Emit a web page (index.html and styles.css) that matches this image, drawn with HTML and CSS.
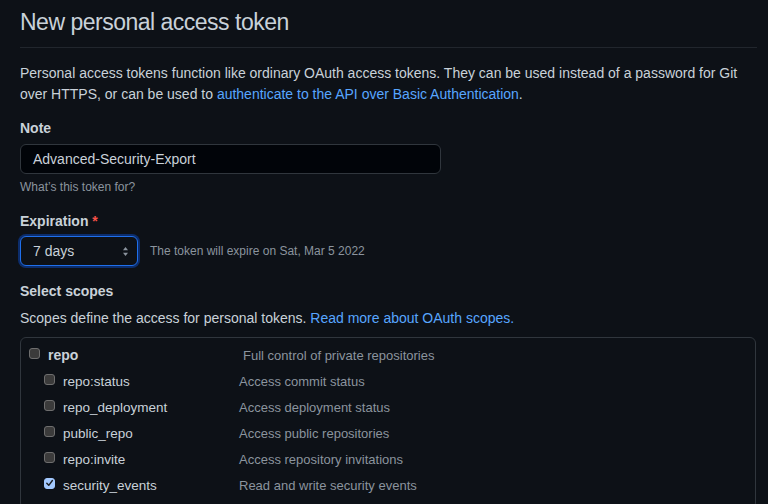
FILE: index.html
```html
<!DOCTYPE html>
<html>
<head>
<meta charset="utf-8">
<link rel="stylesheet" href="styles.css">
</head>
<body>
<main class="page">
  <h1 class="title">New personal access token</h1>
  <p class="intro">Personal access tokens function like ordinary OAuth access tokens. They can be used instead of a password for Git over HTTPS, or can be used to <a href="#">authenticate to the API over Basic Authentication</a>.</p>

  <div class="field">
    <label class="label">Note</label>
    <div class="input">Advanced-Security-Export</div>
    <p class="hint">What’s this token for?</p>
  </div>

  <div class="field exp">
    <label class="label">Expiration <span class="req">*</span></label>
    <div class="exp-row">
      <div class="select">
        <span>7 days</span>
        <svg class="arrows" width="7" height="11" viewBox="0 0 7 11"><path d="M3.5 1 L6 4.2 H1 Z M3.5 10 L6 6.8 H1 Z" fill="#8b949e"/></svg>
      </div>
      <span class="note">The token will expire on Sat, Mar 5 2022</span>
    </div>
  </div>

  <div class="field scopes">
    <label class="label">Select scopes</label>
    <p class="scope-desc">Scopes define the access for personal tokens. <a href="#">Read more about OAuth scopes.</a></p>
  </div>

  <div class="box">
    <div class="row parent">
      <span class="cb"></span>
      <span class="name">repo</span>
      <span class="desc">Full control of private repositories</span>
    </div>
    <div class="row child">
      <span class="cb"></span>
      <span class="name">repo:status</span>
      <span class="desc">Access commit status</span>
    </div>
    <div class="row child">
      <span class="cb"></span>
      <span class="name">repo_deployment</span>
      <span class="desc">Access deployment status</span>
    </div>
    <div class="row child">
      <span class="cb"></span>
      <span class="name">public_repo</span>
      <span class="desc">Access public repositories</span>
    </div>
    <div class="row child">
      <span class="cb"></span>
      <span class="name">repo:invite</span>
      <span class="desc">Access repository invitations</span>
    </div>
    <div class="row child">
      <span class="cb checked"><svg width="10" height="10" viewBox="0 0 10 10"><path d="M2 5.2 L4.2 7.6 L8.2 2.2" fill="none" stroke="#1b1f24" stroke-width="1.6" stroke-linecap="round" stroke-linejoin="round"/></svg></span>
      <span class="name">security_events</span>
      <span class="desc">Read and write security events</span>
    </div>
  </div>
</main>
</body>
</html>
```

FILE: styles.css
```css
html, body {
  margin: 0;
  padding: 0;
  background: #0d1117;
  height: 504px;
  overflow: hidden;
}
body {
  font-family: "Liberation Sans", Arial, sans-serif;
  color: #c9d1d9;
  font-size: 14px;
}
.page {
  padding: 0 11px 0 20px;
}
.title {
  margin: 0;
  padding: 9px 0 12px;
  font-size: 23px;
  letter-spacing: -0.5px;
  font-weight: 400;
  line-height: 26px;
  color: #c9d1d9;
  border-bottom: 1px solid #21262d;
}
.intro {
  margin: 15px 0 0;
  line-height: 21px;
}
a {
  color: #58a6ff;
  text-decoration: none;
}
.field {
  margin-top: 13px;
}
.label {
  display: block;
  font-weight: 600;
  line-height: 20px;
}
.input {
  margin-top: 6px;
  width: 421px;
  height: 30px;
  box-sizing: border-box;
  border: 1px solid #30363d;
  border-radius: 6px;
  background: #010409;
  padding: 0 12px;
  line-height: 28px;
  color: #c9d1d9;
}
.hint {
  margin: 5px 0 0;
  font-size: 12px;
  line-height: 16px;
  color: #8b949e;
}
.exp {
  margin-top: 16px;
}
.req {
  color: #f85149;
}
.exp-row {
  margin-top: 5px;
  display: flex;
  align-items: center;
  gap: 12px;
}
.select {
  width: 118px;
  height: 30px;
  box-sizing: border-box;
  border: 1px solid #1f6feb;
  box-shadow: 0 0 0 2px #0c2d6b;
  border-radius: 6px;
  background: #0d1117;
  padding: 0 8px 0 12px;
  display: flex;
  align-items: center;
  justify-content: space-between;
}
.note {
  font-size: 12px;
  color: #8b949e;
}
.scopes {
  margin-top: 15px;
}
.scope-desc {
  margin: 7px 0 0;
  line-height: 20px;
}
.box {
  margin-top: 9px;
  width: 736px;
  box-sizing: border-box;
  border: 1px solid #30363d;
  border-radius: 6px;
  padding: 4px 0 10px;
}
.row {
  display: flex;
  align-items: center;
  height: 26px;
}
.parent {
  padding-left: 8px;
}
.child {
  padding-left: 23px;
}
.cb {
  flex: none;
  width: 11px;
  height: 11px;
  box-sizing: border-box;
  border: 1px solid #6e6e6e;
  border-radius: 3px;
  background: #3b3b3b;
  margin-right: 8px;
  margin-top: -4px;
  display: flex;
  align-items: center;
  justify-content: center;
}
.cb.checked {
  background: #a3c9ff;
  border-color: #a3c9ff;
}
.name {
  color: #c9d1d9;
}
.parent .name {
  font-weight: 700;
  width: 195px;
}
.child .name {
  font-size: 13.5px;
  width: 176px;
}
.desc {
  font-size: 13px;
  color: #8b949e;
}
```
